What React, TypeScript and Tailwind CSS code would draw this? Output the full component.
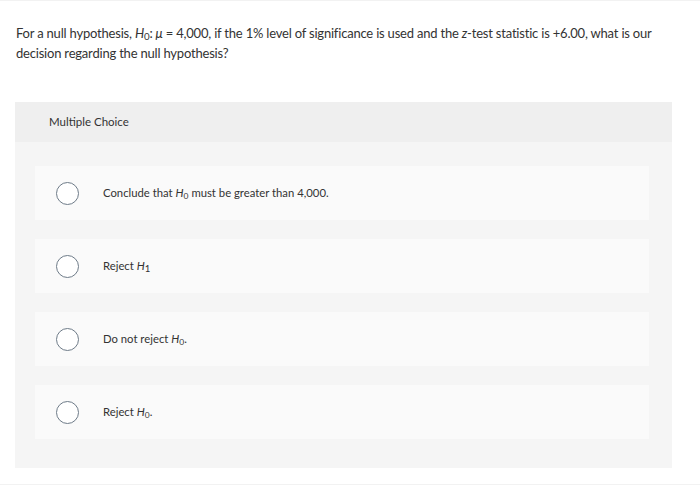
const Sub = ({ n }: { n: string }) => (
  <span className="italic">
    H<sub className="text-[0.75em] not-italic leading-none">{n}</sub>
  </span>
);

const options = [
  <>Conclude that <Sub n="0" /> must be greater than 4,000.</>,
  <>Reject <span className="italic">H</span><sub className="text-[0.85em] leading-none">1</sub></>,
  <>Do not reject <Sub n="0" />.</>,
  <>Reject <Sub n="0" />.</>,
];

const App = () => {
  return (
    <div className="w-[700px] h-[485px] bg-white border-t border-b border-[#f2f2f2] font-['Lato',sans-serif] text-[#333]">
      <p className="pl-4 pr-2 pt-[22px] text-[13px] tracking-[-0.2px] leading-[20px]">
        For a null hypothesis, <Sub n="0" />: <span className="italic">μ</span> = 4,000, if the 1% level
        of significance is used and the <span className="italic">z</span>-test statistic is +6.00, what is our
        decision regarding the null hypothesis?
      </p>
      <div className="ml-[15px] mt-[39px] w-[657px] bg-[#f5f5f5]">
        <div className="h-10 bg-[#efefef] flex items-center pl-[34px] text-[11.5px]">Multiple Choice</div>
        <div className="flex flex-col gap-[19px] pl-5 pr-[23px] pt-6 pb-[29px]">
          {options.map((o, i) => (
            <div key={i} className="h-[54px] bg-[#fafafa] flex items-center">
              <div className="ml-[21px] w-[23px] h-[23px] rounded-full border-[1.5px] border-[#6e7b88] bg-white" />
              <div className="ml-[24px] text-[11.3px]">{o}</div>
            </div>
          ))}
        </div>
      </div>
    </div>
  );
};

export default App;
